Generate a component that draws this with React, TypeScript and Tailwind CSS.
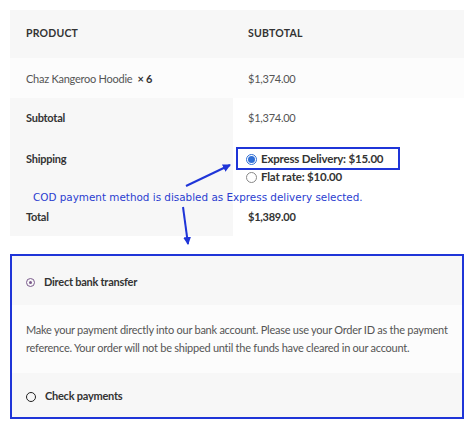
import React from "react";

const font = { fontFamily: '"Lato", "Noto Sans", sans-serif' };

const ShippingRadio: React.FC<{ checked?: boolean; label: string }> = ({ checked, label }) => (
  <div className="flex items-center gap-[4px] h-[18px]">
    <span
      className={
        checked
          ? "w-[11px] h-[11px] rounded-full border border-[#2f6fd6] bg-white flex items-center justify-center"
          : "w-[11px] h-[11px] rounded-full border border-[#888] bg-white"
      }
    >
      {checked && <span className="w-[7px] h-[7px] rounded-full bg-[#2f6fd6]" />}
    </span>
    <span className="font-bold text-[#333] text-[11.5px] tracking-[-0.2px]">{label}</span>
  </div>
);

const App: React.FC = () => {
  return (
    <div
      className="w-[474px] h-[433px] bg-white p-[10px] text-[11px] tracking-[-0.25px] text-[#555]"
      style={font}
    >
      <div className="relative w-[454px]">
        {/* order table */}
        <div className="grid grid-cols-[223px_231px]">
          <div className="h-[48px] bg-[#f7f7f7] flex items-center pl-[16px] font-bold text-[#333] text-[10.5px] tracking-[0.2px]">
            PRODUCT
          </div>
          <div className="h-[48px] bg-[#f7f7f7] flex items-center pl-[15px] font-bold text-[#333] text-[10.5px] tracking-[0.2px]">
            SUBTOTAL
          </div>

          <div className="h-[40px] bg-[#fcfcfc] flex items-center pl-[16px] pt-[3px]">
            Chaz Kangeroo Hoodie<span className="ml-[5px] font-bold text-[#333]">× 6</span>
          </div>
          <div className="h-[40px] bg-[#fcfcfc] flex items-center pl-[15px] pt-[3px]">$1,374.00</div>

          <div className="h-[40px] bg-[#f7f7f7] flex items-center pl-[16px] pt-[1px] font-bold text-[#333]">Subtotal</div>
          <div className="h-[40px] flex items-center pl-[15px] pt-[1px]">$1,374.00</div>

          <div className="h-[52px] bg-[#f7f7f7] pl-[16px] pt-[13px] font-bold text-[#333]">Shipping</div>
          <div className="h-[52px] pl-[13px] pt-[12px]">
            <ShippingRadio checked label="Express Delivery: $15.00" />
            <ShippingRadio label="Flat rate: $10.00" />
          </div>

          <div className="h-[46px] bg-[#f7f7f7] flex items-center pl-[16px] pt-[8px] font-bold text-[#333]">Total</div>
          <div className="h-[46px] flex items-center pl-[15px] pt-[8px] font-bold text-[#333]">$1,389.00</div>
        </div>

        {/* payment methods */}
        <div className="mt-[18px] border-2 border-[#1f35d8]">
          <div className="h-[49px] bg-[#f7f7f7] flex items-center pl-[14px] pt-[3px] gap-[9px] font-bold text-[#333]">
            <span className="w-[9px] h-[9px] rounded-full border-[1.5px] border-[#7a5a8c] flex items-center justify-center">
              <span className="w-[3px] h-[3px] rounded-full bg-[#7a5a8c]" />
            </span>
            Direct bank transfer
          </div>
          <div className="h-[68px] bg-[#fcfcfc] flex items-center pl-[14px] pr-[8px] leading-[18px]">
            Make your payment directly into our bank account. Please use your Order ID as the payment reference. Your
            order will not be shipped until the funds have cleared in our account.
          </div>
          <div className="h-[44px] bg-[#f7f7f7] flex items-center pl-[14px] pt-[3px] gap-[9px] font-bold text-[#333]">
            <span className="w-[10px] h-[10px] rounded-full border-[1.5px] border-[#222]" />
            Check payments
          </div>
        </div>

        {/* annotations */}
        <div className="absolute left-[226px] top-[137px] w-[164px] h-[23px] border-2 border-[#1f35d8]" />
        <div
          className="absolute left-[23px] top-[180px] text-[#2a3dd0] whitespace-nowrap tracking-normal"
          style={{ fontFamily: '"DejaVu Sans", sans-serif', fontSize: "10.4px" }}
        >
          COD payment method is disabled as Express delivery selected.
        </div>
        <svg className="absolute left-0 top-0 pointer-events-none" width="454" height="260" viewBox="0 0 454 260">
          <defs>
            <marker id="ah" markerWidth="8" markerHeight="8" refX="7" refY="4" orient="auto" markerUnits="userSpaceOnUse">
              <path d="M0,0 L8,4 L0,8 z" fill="#1f35d8" />
            </marker>
          </defs>
          <line x1="176" y1="176" x2="220" y2="155" stroke="#1f35d8" strokeWidth="2" markerEnd="url(#ah)" />
          <line x1="173" y1="197" x2="178" y2="234" stroke="#1f35d8" strokeWidth="2" markerEnd="url(#ah)" />
        </svg>
      </div>
    </div>
  );
};

export default App;
